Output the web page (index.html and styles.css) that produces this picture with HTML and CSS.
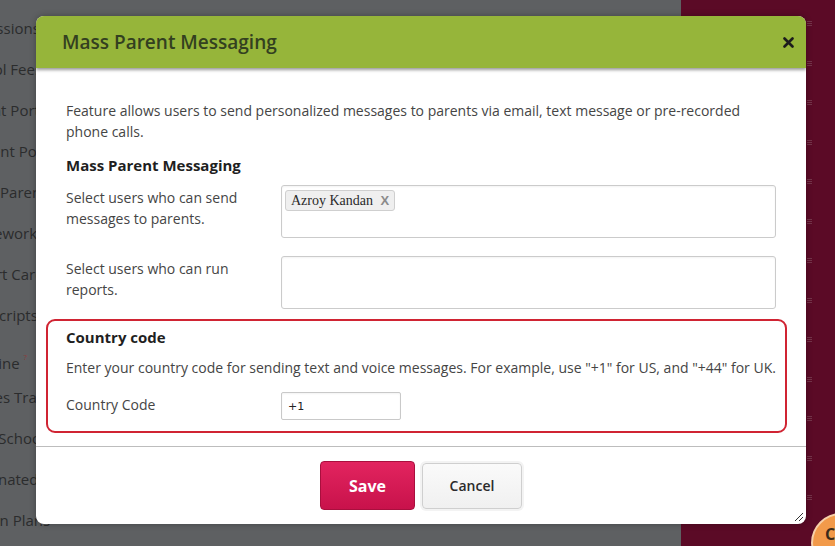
FILE: index.html
```html
<!DOCTYPE html>
<html lang="en">
<head>
<meta charset="utf-8">
<title>Mass Parent Messaging</title>
<link rel="stylesheet" href="styles.css">
</head>
<body>
<div class="page">
  <nav class="sidebar">
    <ul class="nav-list">
      <li>Admissions</li>
      <li>School Fees</li>
      <li>Parent Portal</li>
      <li>Student Portal</li>
      <li>Mass Parent</li>
      <li>Homework</li>
      <li>Report Cards</li>
      <li>Transcripts</li>
      <li>Timeline <sup class="new">?</sup></li>
      <li>Grades Tracker</li>
      <li>After School</li>
      <li>Nominated</li>
      <li>Lesson Plans</li>
    </ul>
  </nav>
  <main class="content">
    <ul class="tool-list">
      <li><span class="grip"></span></li>
      <li><span class="grip"></span></li>
      <li><span class="grip"></span></li>
      <li><span class="grip"></span></li>
      <li><span class="grip"></span></li>
      <li><span class="grip"></span></li>
      <li><span class="grip"></span></li>
      <li><span class="grip"></span></li>
      <li><span class="grip"></span></li>
      <li><span class="grip"></span></li>
      <li><span class="grip"></span></li>
      <li><span class="grip"></span></li>
      <li><span class="grip"></span></li>
    </ul>
  </main>
</div>

<div class="modal">
  <header class="modal-header">
    <h2>Mass Parent Messaging</h2>
    <button class="close" aria-label="Close">
      <svg width="11" height="11" viewBox="0 0 11 11"><path d="M1.5 1.5 L9.5 9.5 M9.5 1.5 L1.5 9.5" stroke="#1c1c1c" stroke-width="2.6" stroke-linecap="round"/></svg>
    </button>
  </header>
  <div class="modal-body">
    <p class="desc">Feature allows users to send personalized messages to parents via email, text message or pre-recorded phone calls.</p>
    <h3 class="section-title">Mass Parent Messaging</h3>
    <div class="form-row">
      <label class="field-label">Select users who can send messages to parents.</label>
      <div class="multi-input">
        <span class="chip">Azroy Kandan <span class="chip-x">x</span></span>
      </div>
    </div>
    <div class="form-row second">
      <label class="field-label">Select users who can run reports.</label>
      <div class="multi-input"></div>
    </div>
    <section class="highlight">
      <h3 class="section-title">Country code</h3>
      <p class="desc">Enter your country code for sending text and voice messages. For example, use "+1" for US, and "+44" for UK.</p>
      <div class="form-row">
        <label class="field-label">Country Code</label>
        <input class="text-input" type="text" value="+1">
      </div>
    </section>
  </div>
  <footer class="modal-footer">
    <button class="btn btn-save">Save</button>
    <button class="btn btn-cancel">Cancel</button>
  </footer>
  <span class="resize">
    <svg width="12" height="12" viewBox="0 0 12 12"><path d="M11 3 L3 11 M11 7 L7 11" stroke="#333" stroke-width="1"/></svg>
  </span>
</div>

<div class="chat-btn">Chat</div>
</body>
</html>
```

FILE: styles.css
```css
* { box-sizing: border-box; }
html, body { margin: 0; height: 100%; }
body {
  font-family: "Open Sans", "Lato", sans-serif;
  background: #5e6062;
  overflow: hidden;
}

.page { display: flex; height: 546px; }
.sidebar { width: 681px; flex: none; background: #5e6062; overflow: hidden; }
.nav-list { list-style: none; margin: 0 0 0 -40px; padding: 8px 0 0; }
.nav-list li {
  height: 41px; line-height: 41px; font-size: 15px; color: #2b2c2d; white-space: nowrap;
}
.nav-list .new { color: #8a3b3b; font-size: 8px; vertical-align: 9px; }

.content { flex: 1; background: #5b0a26; }
.tool-list { list-style: none; margin: 0; padding: 21px 0 0 126px; }
.tool-list li { height: 39.5px; }
.grip {
  display: block; width: 5px; height: 5px;
  border-top: 1px solid #743449; border-bottom: 1px solid #743449;
  position: relative;
}
.grip::after {
  content: ""; position: absolute; left: 0; right: 0; top: 1px; border-top: 1px solid #743449;
}

/* modal */
.modal {
  position: absolute; left: 36px; top: 16px; width: 770px; height: 508px;
  background: #fff; border-radius: 8px; overflow: hidden;
  display: flex; flex-direction: column;
  box-shadow: 0 0 6px rgba(0,0,0,.3);
}
.modal-header {
  height: 52px; flex: none; background: #96b53a;
  display: flex; align-items: center; justify-content: space-between;
  padding: 0 12px 0 26px;
  box-shadow: 0 2px 3px rgba(0,0,0,.4);
  position: relative; z-index: 1;
}
.modal-header h2 { margin: 0; font-size: 19px; font-weight: 600; color: #334020; }
.close { background: none; border: 0; padding: 0; width: 11px; height: 11px; display: flex; }

.modal-body {
  flex: 1; padding: 32px 30px 0 30px; border-bottom: 1px solid #bdbdbd;
  color: #454545; font-size: 14px; line-height: 21px;
}
.desc { margin: 0; }
.section-title { margin: 13px 0 9px; font-size: 15px; font-weight: 700; line-height: 21px; color: #1f1f1f; }
.form-row { display: grid; grid-template-columns: 215px 1fr; align-items: start; }
.form-row.second { margin-top: 18px; }
.field-label { padding-top: 2px; max-width: 190px; }
.multi-input {
  height: 53px; border: 1px solid #cbcbcb; border-radius: 3px; padding: 3px;
  box-shadow: inset 0 1px 2px rgba(0,0,0,.05);
}
.chip {
  display: inline-block; height: 21px; line-height: 19px; padding: 0 5px;
  background: #efefef; border: 1px solid #cfcfcf; border-radius: 3px;
  font-family: "Liberation Serif", serif; font-size: 14px; color: #2a2a2a;
}
.chip-x { font-family: "Liberation Sans", sans-serif; font-weight: 700; font-size: 13px; color: #8b8b8b; margin-left: 4px; text-transform: uppercase; }

.highlight {
  margin: 10px -11px 0 -20px;
  border: 2px solid #d02433; border-radius: 9px;
  padding: 6px 9px 11px 18px;
}
.highlight .section-title { margin: 0 0 9px; }
.highlight .desc { margin-bottom: 14px; }
.text-input {
  width: 120px; height: 28px; border: 1px solid #c9c9c9; border-radius: 2px;
  padding: 0 6px; font-family: "DejaVu Sans", sans-serif; font-size: 11px; color: #222;
  box-shadow: inset 0 1px 2px rgba(0,0,0,.05);
}

.modal-footer {
  height: 77px; flex: none;
  display: flex; align-items: center; justify-content: center; gap: 7px;
}
.btn { font-family: inherit; cursor: pointer; border-radius: 4px; }
.btn-save {
  width: 95px; height: 49px; font-size: 16px; font-weight: 700; color: #fff;
  background: linear-gradient(#e2245f, #c8124b);
  border: 1px solid #a90f3e;
}
.btn-cancel {
  width: 100px; height: 46px; font-size: 14px; font-weight: 600; color: #2b2b2b;
  background: linear-gradient(#fafafa, #f0f0f0);
  border: 1px solid #cfcfcf;
  box-shadow: 0 0 0 2px #f3f3f3;
}
.resize { position: absolute; right: 2px; bottom: 2px; width: 12px; height: 12px; display: flex; }

.chat-btn {
  position: absolute; left: 811px; top: 513px; width: 80px; height: 60px;
  border-radius: 30px; background: #f29a4a; border: 2px solid #f7d0a8;
  padding: 8px 0 0 12px; font-size: 16px; font-weight: 700; color: #3a2a1a;
}
```
